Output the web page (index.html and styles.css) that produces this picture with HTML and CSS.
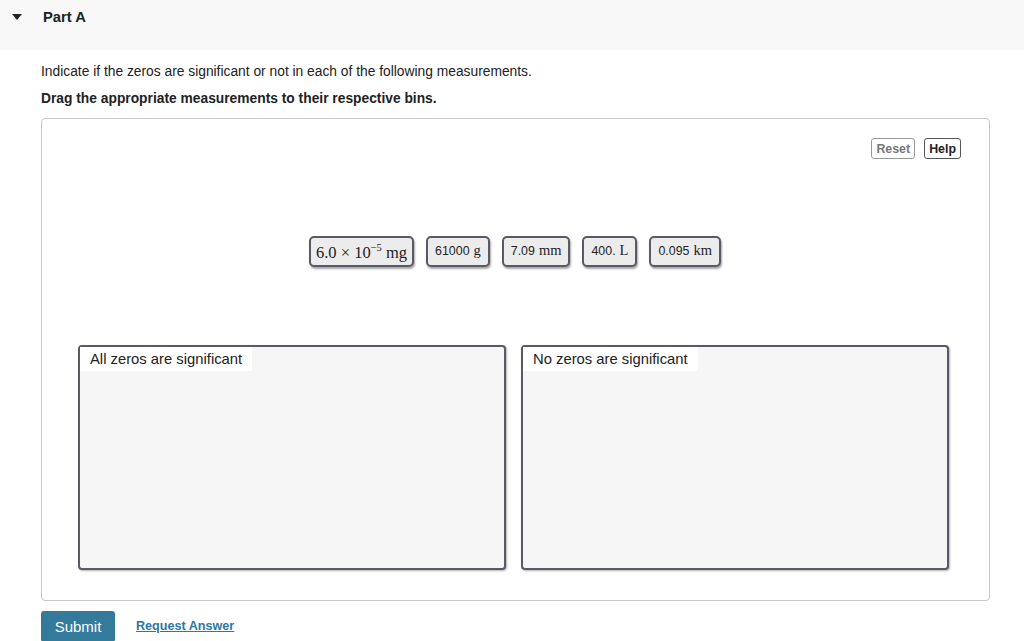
FILE: index.html
```html
<!DOCTYPE html>
<html lang="en">
<head>
    <meta charset="UTF-8">
    <title>Part A</title>
    <link rel="stylesheet" href="styles.css">
</head>
<body>

    <!-- Part header -->
    <div class="part-header">
        <span class="caret"></span>
        <h2>Part A</h2>
    </div>

    <div class="part-body">
        <p class="prompt">Indicate if the zeros are significant or not in each of the following measurements.</p>
        <p class="prompt bold">Drag the appropriate measurements to their respective bins.</p>

        <div class="drag-box">
            <div class="toolbar">
                <button class="tool-btn reset">Reset</button>
                <button class="tool-btn">Help</button>
            </div>

            <!-- Draggable items -->
            <div class="chips">
                <div class="chip chip-wide"><span class="math">6.0 × 10<sup>−5</sup> mg</span></div>
                <div class="chip">61000 <span class="math">g</span></div>
                <div class="chip">7.09 <span class="math">mm</span></div>
                <div class="chip">400. <span class="math">L</span></div>
                <div class="chip">0.095 <span class="math">km</span></div>
            </div>

            <!-- Bins -->
            <div class="bins">
                <div class="bin">
                    <div class="bin-label">All zeros are significant</div>
                </div>
                <div class="bin">
                    <div class="bin-label">No zeros are significant</div>
                </div>
            </div>
        </div>

        <div class="actions">
            <button class="submit">Submit</button>
            <a href="#" class="request">Request Answer</a>
        </div>
    </div>

</body>
</html>
```

FILE: styles.css
```css
* {
    box-sizing: border-box;
    margin: 0;
    padding: 0;
}

body {
    font-family: 'Liberation Sans', Arial, sans-serif;
    color: #222;
    background: #fff;
    width: 1024px;
    height: 641px;
    overflow: hidden;
}

/* Header band */
.part-header {
    height: 50px;
    background: #f8f8f8;
    display: flex;
    align-items: flex-start;
    padding: 8px 0 0 12px;
}

.caret {
    width: 0;
    height: 0;
    border-left: 5px solid transparent;
    border-right: 5px solid transparent;
    border-top: 6px solid #222;
    margin-top: 6px;
}

.part-header h2 {
    font-size: 14.8px;
    font-weight: bold;
    margin-left: 21px;
    line-height: 18px;
    color: #222;
}

.part-body {
    padding: 14px 34px 0 41px;
}

.prompt {
    font-size: 13.8px;
    line-height: 16px;
    color: #222;
}

.prompt.bold {
    font-weight: bold;
    margin-top: 11px;
}

/* Main drag area */
.drag-box {
    margin-top: 11px;
    height: 483px;
    border: 1px solid #c8c8c8;
    border-radius: 4px;
    padding: 19px 40px 0 36px;
}

.toolbar {
    display: flex;
    justify-content: flex-end;
    gap: 9px;
    margin-right: -12px;
}

.tool-btn {
    font-family: 'Liberation Sans', Arial, sans-serif;
    font-size: 12.4px;
    font-weight: bold;
    color: #222;
    background: #fff;
    border: 1px solid #555;
    border-radius: 3px;
    height: 21px;
    padding: 0 4px;
}

.tool-btn.reset {
    color: #777;
    border-color: #999;
}

.chips {
    display: flex;
    justify-content: center;
    gap: 12px;
    margin-top: 77px;
    padding-left: 3px;
}

.chip {
    height: 31px;
    display: flex;
    align-items: center;
    padding: 0 7px 2px;
    font-size: 12.4px;
    color: #222;
    background: #ececec;
    border: 2px solid #5a5a66;
    border-radius: 5px;
    box-shadow: 1px 2px 2px rgba(0, 0, 0, 0.35);
}

.math {
    font-family: 'Liberation Serif', 'Times New Roman', serif;
    font-size: 14.5px;
    margin-left: 4px;
}

.chip-wide .math {
    margin-left: 0;
    font-size: 16.5px;
}

.chip-wide {
    padding: 2px 5px 0;
}

.math sup {
    font-size: 10.5px;
    vertical-align: 7px;
}

/* Bins */
.bins {
    display: flex;
    gap: 15px;
    margin-top: 78px;
}

.bin {
    flex: 1;
    height: 225px;
    background: #f6f6f6;
    border: 2px solid #5a5a66;
    border-radius: 4px;
    box-shadow: 1px 1px 2px rgba(0, 0, 0, 0.3);
}

.bin-label {
    display: inline-block;
    background: #fff;
    font-size: 14.8px;
    color: #222;
    padding: 4px 10px 4px 10px;
    line-height: 16px;
}

/* Submit row */
.actions {
    display: flex;
    align-items: center;
    gap: 21px;
    margin-top: 10px;
}

.submit {
    font-family: 'Liberation Sans', Arial, sans-serif;
    background: #347b9b;
    color: #fff;
    border: none;
    border-radius: 3px;
    font-size: 15px;
    width: 74px;
    height: 31px;
}

.request {
    font-size: 12.6px;
    font-weight: bold;
    color: #2b78a5;
    text-decoration: underline;
    margin-top: -2px;
}
```
